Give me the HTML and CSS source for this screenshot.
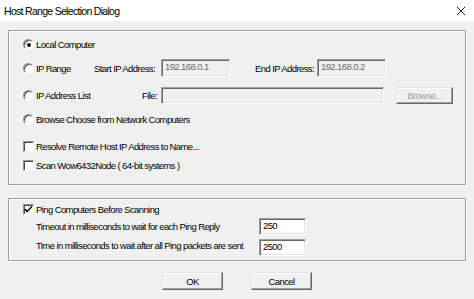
FILE: index.html
```html
<!DOCTYPE html>
<html lang="en">
<head>
    <meta charset="UTF-8">
    <title>Host Range Selection Dialog</title>
    <link rel="stylesheet" href="styles.css">
</head>
<body>

<!-- Window caption -->
<header class="titlebar">
    <span class="title">Host Range Selection Dialog</span>
    <svg class="close" width="10" height="10" viewBox="0 0 10 10" aria-label="Close">
        <path d="M1 1 L9 9 M9 1 L1 9" stroke="#222" stroke-width="1" fill="none"/>
    </svg>
</header>

<main class="dialog">
    <!-- Which hosts to scan -->
    <section class="group group-hosts">
        <div class="row row-local">
            <span class="radio checked"></span>
            <span>Local Computer</span>
        </div>
        <div class="row row-range">
            <span class="opt opt-range"><span class="radio"></span>IP Range</span>
            <span class="lbl lbl-start">Start IP Address:</span>
            <span class="edit disabled ip">192.168.0.1</span>
            <span class="lbl lbl-end">End IP Address:</span>
            <span class="edit disabled ip">192.168.0.2</span>
        </div>
        <div class="row row-list">
            <span class="opt opt-list"><span class="radio"></span>IP Address List</span>
            <span class="lbl lbl-file">File:</span>
            <span class="edit disabled file"></span>
            <span class="btn btn-browse disabled">Browse...</span>
        </div>
        <div class="row row-net">
            <span class="radio"></span>
            <span>Browse Choose from Network Computers</span>
        </div>
        <div class="row row-check row-resolve">
            <span class="check"></span>
            <span>Resolve Remote Host IP Address to Name...</span>
        </div>
        <div class="row row-check row-scan">
            <span class="check"></span>
            <span>Scan Wow6432Node ( 64-bit systems )</span>
        </div>
    </section>

    <!-- Ping options -->
    <section class="group group-ping">
        <div class="row row-ping">
            <span class="check checked">
                <svg width="9" height="9" viewBox="0 0 9 9"><path d="M1 4 L3 6.5 L8 1.5" stroke="#111" stroke-width="1.6" fill="none"/></svg>
            </span>
            <span>Ping Computers Before Scanning</span>
        </div>
        <div class="row row-time">
            <span class="time-lbl">Timeout in milliseconds to wait for each Ping Reply</span>
            <span class="edit num">250</span>
        </div>
        <div class="row row-time row-time-2">
            <span class="time-lbl">Time in milliseconds to wait after all Ping packets are sent</span>
            <span class="edit num">2500</span>
        </div>
    </section>

    <div class="buttons">
        <span class="btn btn-ok">OK</span>
        <span class="btn btn-cancel">Cancel</span>
    </div>
</main>

</body>
</html>
```

FILE: styles.css
```css
body {
    font-family: "Liberation Sans", Arial, sans-serif;
    font-size: 9.5px;
    letter-spacing: -0.6px;
    background-color: #f0f0f0;
    color: #000;
    margin: 0;
    padding: 0;
    width: 474px;
    height: 299px;
    overflow: hidden;
}
.titlebar {
    height: 21px;
    background-color: #fff;
    display: flex;
    align-items: center;
    justify-content: space-between;
    padding: 0 8px 0 4px;
}
.title {
    font-size: 10.5px;
    letter-spacing: -0.7px;
    color: #000;
}
.dialog {
    padding: 9px 8px 0 8px;
}
.group {
    border: 1px solid #a0a0a0;
    box-shadow: inset 1px 1px #fff, 1px 1px #fff;
    box-sizing: border-box;
}
.group-hosts {
    height: 155px;
    padding: 1px 0 0 14px;
}
.group-ping {
    height: 63px;
    margin-top: 13px;
    padding: 1px 0 0 14px;
}
.row {
    display: flex;
    align-items: center;
    height: 24px;
    white-space: nowrap;
}
.row-list {
    margin-top: 3px;
}
.row-check {
    height: 18px;
}
.row-resolve {
    margin-top: 6px;
}
.row-scan {
    margin-top: 1px;
}
.opt {
    display: flex;
    align-items: center;
}
.opt-range {
    width: 68px;
}
.opt-list {
    width: 68px;
}
.lbl {
    text-align: right;
}
.lbl-start {
    width: 64px;
    margin-right: 6px;
}
.lbl-end {
    width: 84px;
    margin-right: 3px;
}
.lbl-file {
    width: 66px;
    margin-right: 4px;
}
.radio {
    display: inline-block;
    position: relative;
    width: 11px;
    height: 11px;
    box-sizing: border-box;
    border-radius: 50%;
    border: 1px solid;
    border-color: #909090 #fff #fff #909090;
    box-shadow: inset 1px 1px #505050;
    background-color: #fff;
    margin-right: 2px;
    flex: none;
}
.radio.checked::after {
    content: "";
    position: absolute;
    left: 3px;
    top: 3px;
    width: 4px;
    height: 4px;
    border-radius: 50%;
    background-color: #111;
}
.check {
    display: inline-flex;
    align-items: center;
    justify-content: center;
    width: 11px;
    height: 11px;
    box-sizing: border-box;
    border: 1px solid;
    border-color: #909090 #fff #fff #909090;
    box-shadow: inset 1px 1px #505050;
    background-color: #fff;
    margin-right: 2px;
    flex: none;
}
.edit {
    display: inline-block;
    box-sizing: border-box;
    height: 18px;
    border: 1px solid;
    border-color: #a0a0a0 #fff #fff #a0a0a0;
    box-shadow: inset 1px 1px #696969, inset -1px -1px #e3e3e3;
    background-color: #fff;
    padding: 1px 0 0 3px;
    line-height: 11px;
}
.edit.disabled {
    background-color: #f0f0f0;
    color: #6d6d6d;
}
.ip {
    width: 69px;
}
.file {
    width: 223px;
    height: 17px;
}
.btn {
    display: inline-flex;
    align-items: center;
    justify-content: center;
    box-sizing: border-box;
    border: 1px solid;
    border-color: #e3e3e3 #696969 #696969 #e3e3e3;
    box-shadow: inset -1px -1px #a0a0a0, inset 1px 1px #fff;
    background-color: #f0f0f0;
    color: #000;
}
.btn.disabled {
    color: #a0a0a0;
}
.btn-browse {
    width: 57px;
    height: 17px;
    margin-left: 12px;
}
.row-ping {
    height: 17px;
    margin-top: 1px;
}
.row-time {
    height: 17px;
    padding-left: 13px;
}
.row-time-2 {
    margin-top: 4px;
}
.time-lbl {
    width: 223px;
}
.row-time-2 .time-lbl {
    padding-bottom: 4px;
}
.num {
    width: 47px;
    height: 17px;
}
.buttons {
    display: flex;
    justify-content: center;
    gap: 28px;
    margin-top: 11px;
}
.btn-ok,
.btn-cancel {
    width: 61px;
    height: 18px;
}
```
